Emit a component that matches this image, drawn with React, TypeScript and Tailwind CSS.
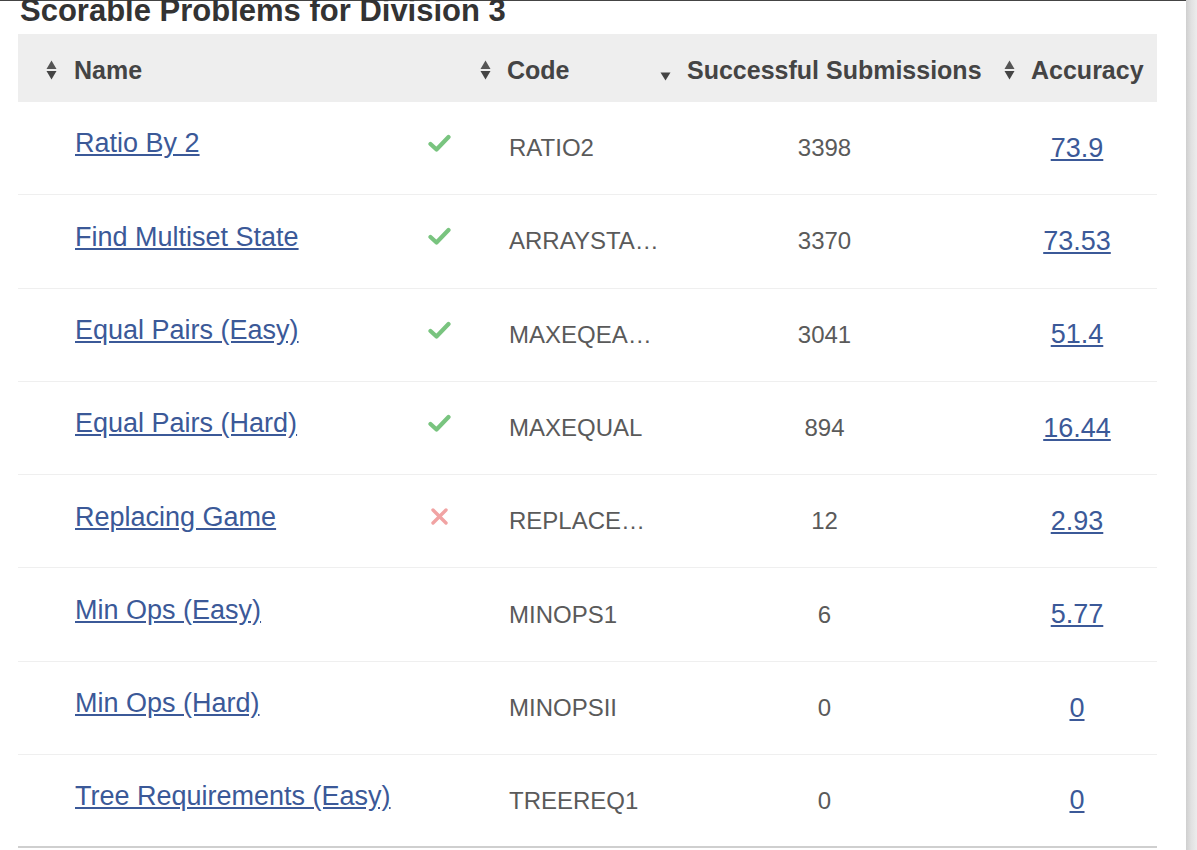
import React from "react";

type Problem = {
  name: string;
  code: string;
  submissions: string;
  accuracy: string;
  status?: "solved" | "failed";
};

const problems: Problem[] = [
  { name: "Ratio By 2", code: "RATIO2", submissions: "3398", accuracy: "73.9", status: "solved" },
  { name: "Find Multiset State", code: "ARRAYSTA…", submissions: "3370", accuracy: "73.53", status: "solved" },
  { name: "Equal Pairs (Easy)", code: "MAXEQEA…", submissions: "3041", accuracy: "51.4", status: "solved" },
  { name: "Equal Pairs (Hard)", code: "MAXEQUAL", submissions: "894", accuracy: "16.44", status: "solved" },
  { name: "Replacing Game", code: "REPLACE…", submissions: "12", accuracy: "2.93", status: "failed" },
  { name: "Min Ops (Easy)", code: "MINOPS1", submissions: "6", accuracy: "5.77" },
  { name: "Min Ops (Hard)", code: "MINOPSII", submissions: "0", accuracy: "0" },
  { name: "Tree Requirements (Easy)", code: "TREEREQ1", submissions: "0", accuracy: "0" },
];

// up/down arrows for sortable columns
const SortIcon = () => (
  <svg width="11" height="20" viewBox="0 0 11 20" className="mt-[-2px] shrink-0">
    <path d="M5.5 0.5 L10.5 9 L0.5 9 Z" fill="#555" />
    <path d="M5.5 19.5 L10.5 11 L0.5 11 Z" fill="#444" />
  </svg>
);

const SortedDownIcon = () => (
  <svg width="11" height="9" viewBox="0 0 11 9" className="mt-[10px] shrink-0">
    <path d="M0.5 0.5 L10.5 0.5 L5.5 8.5 Z" fill="#444" />
  </svg>
);

const CheckIcon = () => (
  <svg width="23" height="19" viewBox="0 0 23 19">
    <path
      d="M2.5 10 L8.5 15.5 L20.5 3"
      fill="none"
      stroke="#79c47f"
      strokeWidth="4.2"
      strokeLinecap="round"
      strokeLinejoin="round"
    />
  </svg>
);

const CrossIcon = () => (
  <svg width="19" height="19" viewBox="0 0 19 19">
    <path
      d="M3 3 L16 16 M16 3 L3 16"
      fill="none"
      stroke="#f1a3a3"
      strokeWidth="3.4"
      strokeLinecap="round"
    />
  </svg>
);

const cols = "grid grid-cols-[402px_50px_182px_345px_160px]";

const App = () => {
  return (
    <div className="flex min-h-[850px] w-full overflow-hidden bg-white font-['Liberation_Sans',Arial,sans-serif]">
      {/* Panel */}
      <div className="w-[1186px] shrink-0 border-t border-[#444]">
        {/* Title */}
        <h2 className="-mt-[5px] pl-[20px] text-[31px] leading-[30px] font-bold text-[#333]">
          Scorable Problems for Division 3
        </h2>

        {/* Table */}
        <div className="ml-[18px] mt-[8px] w-[1139px]">
          {/* Header */}
          <div className={`${cols} h-[68px] bg-[#eeeeee] pt-[6px] text-[25px] font-bold text-[#444]`}>
            <div className="col-span-2 flex items-center gap-[17px] pl-[28px]">
              <SortIcon />
              <span>Name</span>
            </div>
            <div className="flex items-center gap-[16px] pl-[10px]">
              <SortIcon />
              <span>Code</span>
            </div>
            <div className="flex items-center gap-[16px] pl-[8px]">
              <SortedDownIcon />
              <span>Successful Submissions</span>
            </div>
            <div className="flex items-center gap-[16px] pl-[7px]">
              <SortIcon />
              <span>Accuracy</span>
            </div>
          </div>

          {/* Rows */}
          {problems.map((p, i) => (
            <div
              key={p.code}
              className={`${cols} h-[93.3px] ${
                i === problems.length - 1
                  ? "border-b-2 border-[#cfcfcf]"
                  : "border-b border-[#efefef]"
              }`}
            >
              <div className="flex items-center pb-[9px] pl-[57px]">
                <a href="#" className="text-[27px] text-[#3b5998] underline">
                  {p.name}
                </a>
              </div>
              <div className="flex items-center pb-[9px] pl-[8px]">
                {p.status === "solved" && <CheckIcon />}
                {p.status === "failed" && (
                  <span className="pl-[2px]">
                    <CrossIcon />
                  </span>
                )}
              </div>
              <div className="flex items-center pl-[39px] text-[24px] text-[#5a5a5a]">
                {p.code}
              </div>
              <div className="flex items-center justify-center text-[24px] text-[#5a5a5a]">
                {p.submissions}
              </div>
              <div className="flex items-center justify-center">
                <a href="#" className="text-[27px] text-[#3b5998] underline">
                  {p.accuracy}
                </a>
              </div>
            </div>
          ))}
        </div>
      </div>

      {/* Right edge shade */}
      <div className="flex-1 bg-gradient-to-r from-[#cfcfcf] via-[#e2e2e2] to-[#ececec]" />
    </div>
  );
};

export default App;
